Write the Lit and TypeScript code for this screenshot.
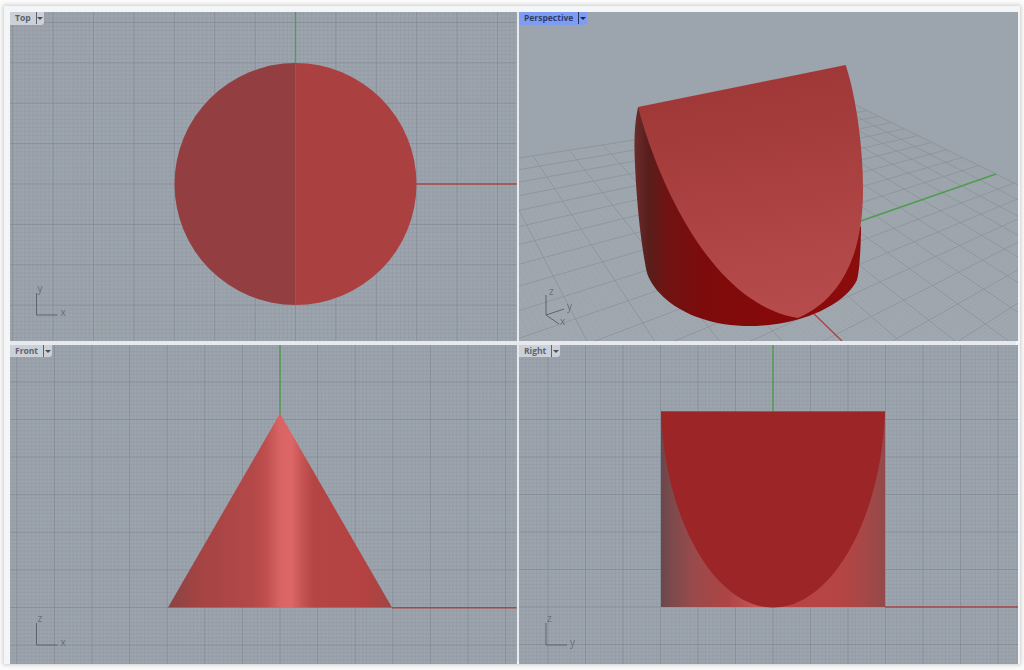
import { LitElement, html, svg, css } from "lit";
import { customElement } from "lit/decorators.js";

type Pt = [number, number];
type Box = { x: number; y: number; w: number; h: number };

const TOP: Box = { x: 10, y: 12, w: 506.5, h: 329 };
const PERSP: Box = { x: 519, y: 12, w: 499, h: 329 };
const FRONT: Box = { x: 10, y: 344.5, w: 506.5, h: 319.5 };
const RIGHT: Box = { x: 519, y: 344.5, w: 499, h: 319.5 };

function orthoGrid(b: Box, ox: number, oy: number, major: number) {
  const minor = major / 10;
  let mi = "";
  let ma = "";
  const x0 = Math.ceil((b.x - ox) / minor);
  const x1 = Math.floor((b.x + b.w - ox) / minor);
  for (let i = x0; i <= x1; i++) {
    const x = (ox + i * minor).toFixed(2);
    const seg = `M${x} ${b.y}V${b.y + b.h}`;
    if (i % 10 === 0) ma += seg;
    else mi += seg;
  }
  const y0 = Math.ceil((b.y - oy) / minor);
  const y1 = Math.floor((b.y + b.h - oy) / minor);
  for (let i = y0; i <= y1; i++) {
    const y = (oy + i * minor).toFixed(2);
    const seg = `M${b.x} ${y}H${b.x + b.w}`;
    if (i % 10 === 0) ma += seg;
    else mi += seg;
  }
  return svg`<path class="minor" d=${mi}></path><path class="major" d=${ma}></path>`;
}

// Floor projection: unit square onto the four measured screen points.
function homography(p0: Pt, p1: Pt, p2: Pt, p3: Pt) {
  const dx1 = p1[0] - p2[0], dx2 = p3[0] - p2[0], sx = p0[0] - p1[0] + p2[0] - p3[0];
  const dy1 = p1[1] - p2[1], dy2 = p3[1] - p2[1], sy = p0[1] - p1[1] + p2[1] - p3[1];
  const det = dx1 * dy2 - dx2 * dy1;
  const g = (sx * dy2 - dx2 * sy) / det;
  const h = (dx1 * sy - sx * dy1) / det;
  const a = p1[0] - p0[0] + g * p1[0], b = p3[0] - p0[0] + h * p3[0], c = p0[0];
  const d = p1[1] - p0[1] + g * p1[1], e = p3[1] - p0[1] + h * p3[1], f = p0[1];
  return (s: number, t: number): Pt => {
    const w = g * s + h * t + 1;
    return [(a * s + b * t + c) / w, (d * s + e * t + f) / w];
  };
}

const project = homography([634, 140], [755, 257], [996, 174], [856, 105]);
const floor = (u: number, v: number) => project(u + 1, v);
const fmt = (p: Pt) => `${p[0].toFixed(1)} ${p[1].toFixed(1)}`;

function perspectiveGrid() {
  let mi = "";
  let ma = "";
  const n = 100;
  for (let i = -n; i <= n; i++) {
    const k = i / n;
    const a = `M${fmt(floor(k, -1))}L${fmt(floor(k, 1))}`;
    const b = `M${fmt(floor(-1, k))}L${fmt(floor(1, k))}`;
    if (i % 10 === 0) ma += a + b;
    else mi += a + b;
  }
  const outline = `M${fmt(floor(-1, -1))}L${fmt(floor(-1, 1))}L${fmt(floor(1, 1))}L${fmt(floor(1, -1))}Z`;
  return svg`<path class="floor" d=${outline}></path>
    <path class="minor-p" d=${mi}></path><path class="major-p" d=${ma}></path>`;
}

const stops = (list: [number, string][]) =>
  list.map(([o, c]) => svg`<stop offset=${o} stop-color=${c}></stop>`);

@customElement("view-port")
class ViewPort extends LitElement {
  static properties = {
    label: { type: String },
    active: { type: Boolean },
  };
  label = "";
  active = false;

  static styles = css`
    :host {
      display: block;
      position: relative;
      overflow: hidden;
      background: #9ca4ad;
      min-width: 0;
      min-height: 0;
    }
    .tab {
      position: absolute;
      left: 0;
      top: 0;
      height: 12.5px;
      display: flex;
      align-items: center;
      padding: 0 0.5px 0 5px;
      background: #ccd0d7;
      border-bottom-right-radius: 3px;
      color: #5c626e;
      font: 700 8.5px/12px "Open Sans", sans-serif;
    }
    .tab.on {
      background: #7e9df2;
      color: #323d66;
    }
    .text {
      padding-right: 5px;
      border-right: 1px solid #5c626e;
    }
    .on .text {
      border-right-color: #2a3358;
    }
    .arrow {
      width: 0;
      height: 0;
      margin: 1px 0.5px 0 0.5px;
      border-left: 3px solid transparent;
      border-right: 3px solid transparent;
      border-top: 3px solid #4a4f5a;
    }
    .on .arrow {
      border-top-color: #1f2648;
    }
  `;

  render() {
    return html`<slot></slot>
      <div class="tab ${this.active ? "on" : ""}">
        <span class="text">${this.label}</span><span class="arrow"></span>
      </div>`;
  }
}

@customElement("app-root")
export class AppRoot extends LitElement {
  static styles = css`
    :host {
      display: block;
      width: 1024px;
      height: 670px;
      background: #fbfbfb;
      box-sizing: border-box;
      padding: 6px 4px;
    }
    .frame {
      height: 100%;
      box-sizing: border-box;
      padding: 6px 4px 2px 6px;
      background: #f4f5f7;
      box-shadow: 0 0 4px 1px #cbcbcb;
    }
    .grid {
      height: 100%;
      display: grid;
      grid-template-columns: 506.5px 499px;
      grid-template-rows: 329px 319.5px;
      column-gap: 2.5px;
      row-gap: 3.5px;
      background: #e6e9ee;
      filter: blur(0.4px);
    }
    svg {
      display: block;
      width: 100%;
      height: 100%;
    }
    .minor {
      stroke: #8f96a0;
      stroke-width: 1;
      fill: none;
      opacity: 0.35;
    }
    .major {
      stroke: #7c7f8b;
      stroke-width: 1;
      fill: none;
      opacity: 0.55;
    }
    .floor {
      fill: #a1a8b0;
    }
    .minor-p {
      stroke: #939aa4;
      stroke-width: 0.5;
      fill: none;
      opacity: 0.35;
    }
    .major-p {
      stroke: #8b9099;
      stroke-width: 0.8;
      fill: none;
    }
    .green {
      stroke: #4f9d50;
      stroke-width: 1.4;
      fill: none;
    }
    .red {
      stroke: #a94747;
      stroke-width: 1.4;
      fill: none;
    }
    .triad {
      stroke: #5f646c;
      stroke-width: 1;
      fill: none;
    }
    .letter {
      fill: #6a6f77;
      font: 10px "Open Sans", sans-serif;
    }
  `;

  private triad(x: number, y: number, a: string, b: string) {
    return svg`<path class="triad" d="M${x} ${y - 22}V${y}H${x + 21}"></path>
      <text class="letter" x=${x + 1} y=${y - 23}>${a}</text>
      <text class="letter" x=${x + 24} y=${y + 1}>${b}</text>`;
  }

  private topView() {
    const b = TOP;
    return svg`<svg viewBox="${b.x} ${b.y} ${b.w} ${b.h}">
      ${orthoGrid(b, 295.5, 184, 40.4)}
      <path class="green" d="M295.5 12V64"></path>
      <path class="red" d="M416 184H516.5"></path>
      <path fill="#933f42" d="M295.5 63A121 121 0 0 0 295.5 305Z"></path>
      <path fill="#ab4040" d="M295.5 63A121 121 0 0 1 295.5 305Z"></path>
      ${this.triad(36.5, 315, "y", "x")}
    </svg>`;
  }

  private perspectiveView() {
    const b = PERSP;
    return svg`<svg viewBox="${b.x} ${b.y} ${b.w} ${b.h}">
      <defs>
        <linearGradient id="body" gradientUnits="userSpaceOnUse" x1="635" y1="0" x2="862" y2="0">
          ${stops([[0, "#6b2c2c"], [0.06, "#571e1b"], [0.14, "#701312"], [0.3, "#7d0b0b"], [0.7, "#880909"], [1, "#8c0d0d"]])}
        </linearGradient>
        <linearGradient id="face" gradientUnits="userSpaceOnUse" x1="735" y1="85" x2="770" y2="310">
          ${stops([[0, "#a03838"], [1, "#b64b4b"]])}
        </linearGradient>
      </defs>
      ${perspectiveGrid()}
      <path class="green" d="M858 222L996 174"></path>
      <path class="red" d="M813 313L842 341"></path>
      <path fill="url(#body)" d="M638 107C634 125 634 145 635 165C637 210 642 250 647 273C655 297 690 326 750 326
        C800 326 845 305 857 280C860 270 861 240 861 227L800 150Z"></path>
      <path fill="url(#face)" d="M638 107L845.7 65C857 100 863 150 863 190C863 240 850 295 798 318C715 305 660 190 638 107Z"></path>
      <path class="triad" d="M546 295V315L564 309M546 315L559 324"></path>
      <text class="letter" x="549" y="295">z</text>
      <text class="letter" x="567" y="310">y</text>
      <text class="letter" x="560" y="325">x</text>
    </svg>`;
  }

  private frontView() {
    const b = FRONT;
    return svg`<svg viewBox="${b.x} ${b.y} ${b.w} ${b.h}">
      <defs>
        <linearGradient id="cone" gradientUnits="userSpaceOnUse" x1="168" y1="0" x2="392" y2="0">
          ${stops([[0, "#8a4444"], [0.14, "#a54343"], [0.38, "#b44848"], [0.44, "#c04f4f"], [0.5, "#d96464"], [0.55, "#dd6767"], [0.6, "#c65353"], [0.65, "#b44545"], [0.88, "#b44242"], [1, "#9f4644"]])}
        </linearGradient>
      </defs>
      ${orthoGrid(b, 280, 607, 37.6)}
      <path class="green" d="M280 344.5V414"></path>
      <path class="red" d="M392 607.2H516.5"></path>
      <path fill="url(#cone)" d="M280 413L392 607H168Z"></path>
      ${this.triad(36.5, 644.5, "z", "x")}
    </svg>`;
  }

  private rightView() {
    const b = RIGHT;
    return svg`<svg viewBox="${b.x} ${b.y} ${b.w} ${b.h}">
      <defs>
        <linearGradient id="side" gradientUnits="userSpaceOnUse" x1="661" y1="0" x2="885" y2="0">
          ${stops([[0, "#6a474b"], [0.05, "#7d4a4c"], [0.15, "#9b4a4b"], [0.3, "#ae4444"], [0.43, "#c45757"], [0.5, "#cd5b5b"], [0.58, "#b84545"], [0.8, "#b64444"], [0.9, "#a84747"], [1, "#93494b"]])}
        </linearGradient>
      </defs>
      ${orthoGrid(b, 773, 606.5, 37.5)}
      <path class="green" d="M773 344.5V412"></path>
      <path class="red" d="M885 606.5H1018"></path>
      <path fill="url(#side)" d="M661 411H885V606.5H661Z"></path>
      <path fill="#9c2528" d="M661 411H885C881 520 831 607 773 607C715 607 665 520 661 411Z"></path>
      ${this.triad(546, 644.5, "z", "y")}
    </svg>`;
  }

  render() {
    return html`<div class="frame">
      <div class="grid">
        <view-port label="Top">${this.topView()}</view-port>
        <view-port label="Perspective" active>${this.perspectiveView()}</view-port>
        <view-port label="Front">${this.frontView()}</view-port>
        <view-port label="Right">${this.rightView()}</view-port>
      </div>
    </div>`;
  }
}

export { ViewPort };
